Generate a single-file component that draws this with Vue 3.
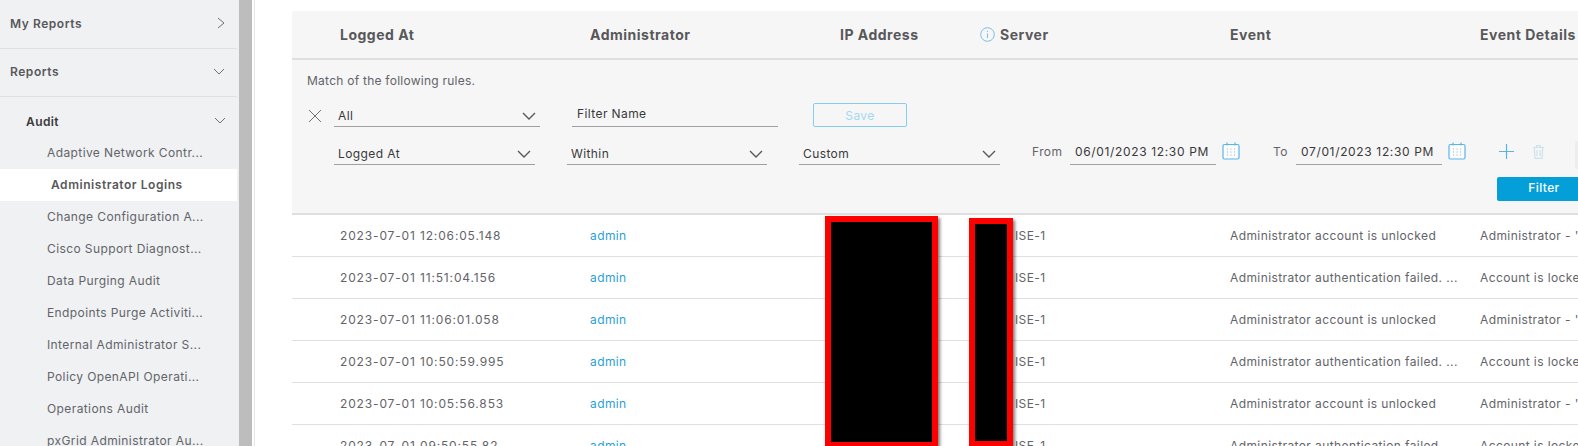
<script setup>
const items = [
  { label: 'Adaptive Network Contr...' },
  { label: 'Administrator Logins', active: true },
  { label: 'Change Configuration A...' },
  { label: 'Cisco Support Diagnost...' },
  { label: 'Data Purging Audit' },
  { label: 'Endpoints Purge Activiti...' },
  { label: 'Internal Administrator S...' },
  { label: 'Policy OpenAPI Operati...' },
  { label: 'Operations Audit' },
  { label: 'pxGrid Administrator Au...' },
]
const unlocked = { event: 'Administrator account is unlocked', details: "Administrator - 'admin' unlocked" }
const failed = { event: 'Administrator authentication failed. ...', details: 'Account is locked' }
const rows = [
  { time: '2023-07-01 12:06:05.148', ...unlocked },
  { time: '2023-07-01 11:51:04.156', ...failed },
  { time: '2023-07-01 11:06:01.058', ...unlocked },
  { time: '2023-07-01 10:50:59.995', ...failed },
  { time: '2023-07-01 10:05:56.853', ...unlocked },
  { time: '2023-07-01 09:50:55.82', ...failed },
]
</script>

<template>
  <div class="page">
    <aside class="sidebar">
      <div class="nav-head">
        <span>My Reports</span>
        <svg class="chev-r" width="8" height="12" viewBox="0 0 8 12"><path d="M1 1l6 5-6 5" /></svg>
      </div>
      <div class="nav-head">
        <span>Reports</span>
        <svg class="chev-d" width="12" height="8" viewBox="0 0 12 8"><path d="M1 1l5 5 5-5" /></svg>
      </div>
      <div class="nav-audit">
        <span>Audit</span>
        <svg class="chev-d" width="12" height="8" viewBox="0 0 12 8"><path d="M1 1l5 5 5-5" /></svg>
      </div>
      <div v-for="item in items" :key="item.label" class="nav-item" :class="{ active: item.active }">{{ item.label }}</div>
    </aside>
    <div class="scrollbar"></div>
    <main class="main">
      <div class="table">
        <div class="grid head">
          <div>Logged At</div>
          <div>Administrator</div>
          <div>IP Address</div>
          <div class="server-head">
            <svg width="15" height="15" viewBox="0 0 15 15" class="info">
              <circle cx="7.5" cy="7.5" r="6.8" />
              <path d="M7.5 6.5v4.5M7.5 3.8v1.2" />
            </svg>
            Server
          </div>
          <div>Event</div>
          <div>Event Details</div>
        </div>

        <section class="panel">
          <div class="match">Match of the following rules.</div>
          <div class="line line-top">
            <svg class="close" width="14" height="12" viewBox="0 0 14 12"><path d="M1 0l12 12M13 0L1 12" /></svg>
            <div class="select w206"><span>All</span><svg class="caret" width="14" height="8" viewBox="0 0 14 8"><path d="M1 1l6 6 6-6" /></svg></div>
            <div class="input-name">Filter Name</div>
            <button class="save">Save</button>
          </div>
          <div class="line line-second">
            <div class="select w201"><span>Logged At</span><svg class="caret" width="14" height="8" viewBox="0 0 14 8"><path d="M1 1l6 6 6-6" /></svg></div>
            <div class="select w200"><span>Within</span><svg class="caret" width="14" height="8" viewBox="0 0 14 8"><path d="M1 1l6 6 6-6" /></svg></div>
            <div class="select w201"><span>Custom</span><svg class="caret" width="14" height="8" viewBox="0 0 14 8"><path d="M1 1l6 6 6-6" /></svg></div>
            <div class="range">
              <span class="from">From</span>
              <div class="date">06/01/2023 12:30 PM</div>
              <svg class="cal" width="18" height="18" viewBox="0 0 18 18">
                <rect x="1" y="2.5" width="16" height="14.5" rx="1.5" />
                <path d="M5 0.5v3M13 0.5v3" />
                <path class="dots" d="M5 7h1M8.5 7h1M12 7h1M5 10h1M8.5 10h1M12 10h1M5 13h1M8.5 13h1M12 13h1" />
              </svg>
              <span class="to">To</span>
              <div class="date">07/01/2023 12:30 PM</div>
              <svg class="cal" width="18" height="18" viewBox="0 0 18 18">
                <rect x="1" y="2.5" width="16" height="14.5" rx="1.5" />
                <path d="M5 0.5v3M13 0.5v3" />
                <path class="dots" d="M5 7h1M8.5 7h1M12 7h1M5 10h1M8.5 10h1M12 10h1M5 13h1M8.5 13h1M12 13h1" />
              </svg>
              <svg class="plus" width="15" height="15" viewBox="0 0 15 15"><path d="M7.5 0v15M0 7.5h15" /></svg>
              <svg class="trash" width="11" height="14" viewBox="0 0 11 14">
                <path d="M0 2.5h11M3.5 2V0.7h4V2M1.3 3l0.7 10.3h7L9.7 3M4 5v6M7 5v6" />
              </svg>
              <div class="pale"></div>
            </div>
          </div>
          <div class="actions"><button class="filter">Filter</button></div>
        </section>

        <div class="body">
          <div v-for="row in rows" :key="row.time" class="grid row">
            <div class="time">{{ row.time }}</div>
            <div class="link">admin</div>
            <div></div>
            <div class="ise">ISE-1</div>
            <div>{{ row.event }}</div>
            <div class="details">{{ row.details }}</div>
          </div>
          <div class="redact redact-ip"></div>
          <div class="redact redact-server"></div>
        </div>
      </div>
    </main>
  </div>
</template>

<style>
html, body { overflow: hidden; background: #fff; }
</style>

<style scoped>
.page {
  display: flex;
  width: 1578px;
  height: 446px;
  overflow: hidden;
  font-family: Inter, "Liberation Sans", sans-serif;
  font-size: 12px;
  letter-spacing: 0.4px;
  color: #626469;
  background: #fff;
}
.sidebar {
  flex: none;
  width: 239px;
  height: 446px;
  overflow: hidden;
  background: #f0f1f3;
}
.nav-head {
  display: flex;
  align-items: center;
  justify-content: space-between;
  box-sizing: border-box;
  width: 237px;
  height: 48.5px;
  padding: 0 12px 1px 10px;
  border-bottom: 1px solid #dfe0e2;
  font-weight: 600;
  letter-spacing: 0.55px;
  color: #58585b;
}
.nav-audit {
  display: flex;
  align-items: center;
  justify-content: space-between;
  box-sizing: border-box;
  width: 237px;
  height: 40px;
  padding: 8px 11px 0 26px;
  font-weight: 600;
  color: #39393b;
}
.chev-r path, .chev-d path { fill: none; stroke: #6e7074; stroke-width: 1; }
.nav-item {
  box-sizing: border-box;
  width: 237px;
  height: 32px;
  padding-left: 47px;
  line-height: 32px;
  white-space: nowrap;
}
.nav-item.active {
  padding-left: 51px;
  background: #fff;
  font-weight: 600;
  letter-spacing: 0.55px;
  color: #58585b;
}
.scrollbar { flex: none; width: 13px; background: #bdbdbd; }
.main {
  flex: none;
  box-sizing: border-box;
  width: 1326px;
  margin-left: 2px;
  padding: 11px 0 0 37px;
  border-left: 1px solid #e6e6e6;
  overflow: hidden;
}
.table { width: 1340px; }
.grid {
  display: grid;
  grid-template-columns: 250px 250px 140px 250px 250px 152px;
  padding-left: 48px;
}
.head {
  height: 47px;
  align-items: center;
  background: #f6f6f6;
  border-bottom: 2px solid #dfdfdf;
  font-size: 14px;
  font-weight: 700;
  letter-spacing: 0.5px;
  color: #58585b;
  white-space: nowrap;
}
.server-head { display: flex; align-items: center; gap: 5px; }
.info circle, .info path { fill: none; stroke: #79bfe9; stroke-width: 1; }
.panel {
  box-sizing: border-box;
  height: 155px;
  padding: 13px 41px 12px 15px;
  background: #f6f6f6;
  border-bottom: 2px solid #dfdfdf;
}
.match { height: 16px; line-height: 16px; letter-spacing: 0.25px; }
.line { display: flex; }
.line-top { margin-top: 13px; height: 25px; align-items: flex-start; }
.close { flex: none; margin: 8px 12px 0 1px; }
.close path { fill: none; stroke: #6e7074; stroke-width: 1; }
.select {
  display: flex;
  flex: none;
  align-items: center;
  justify-content: space-between;
  box-sizing: border-box;
  height: 25px;
  padding: 3px 4px 0 4px;
  border-bottom: 1px solid #a0a0a0;
  color: #39393b;
}
.w206 { width: 206px; }
.w201 { width: 201px; }
.w200 { width: 200px; }
.caret path { fill: none; stroke: #58585b; stroke-width: 1.4; }
.input-name {
  flex: none;
  box-sizing: border-box;
  width: 206px;
  height: 25px;
  margin-left: 32px;
  padding-left: 5px;
  border-bottom: 1px solid #a0a0a0;
  line-height: 24px;
  color: #39393b;
}
.save {
  flex: none;
  box-sizing: border-box;
  width: 94px;
  height: 24px;
  margin: 1px 0 0 35px;
  padding: 0;
  background: transparent;
  border: 1px solid #85cdf0;
  border-radius: 2px;
  font: inherit;
  letter-spacing: inherit;
  color: #a3d8f2;
}
.line-second { margin: 13px 0 0 27px; height: 25px; gap: 32px; }
.range { display: flex; flex: none; align-items: center; height: 25px; }
.from { flex: none; width: 38px; padding-bottom: 2px; box-sizing: border-box; }
.to { flex: none; width: 23px; margin-left: 33px; padding-bottom: 2px; box-sizing: border-box; }
.date {
  flex: none;
  box-sizing: border-box;
  width: 146px;
  height: 25px;
  padding-left: 5px;
  border-bottom: 1px solid #a0a0a0;
  line-height: 24px;
  letter-spacing: 0.65px;
  color: #39393b;
  white-space: nowrap;
}
.cal { flex: none; margin: 0 0 3px 6px; }
.cal rect, .cal > path { fill: #fafcfe; stroke: #59b5ea; stroke-width: 1.2; }
.cal .dots { fill: none; stroke: #a8adc4; stroke-width: 1; }
.plus { flex: none; margin-left: 33px; margin-bottom: 2px; }
.plus path { fill: none; stroke: #5cb4e6; stroke-width: 1.2; }
.trash { flex: none; margin: 0 0 2px 19px; }
.trash path { fill: none; stroke: #cbe3ef; stroke-width: 1.2; }
.pale { flex: none; width: 10px; height: 28px; margin: 4px 0 0 31px; background: #eeeeee; }
.actions { display: flex; justify-content: flex-end; margin-top: 12px; }
.filter {
  box-sizing: border-box;
  width: 94px;
  height: 24px;
  padding: 0 0 3px;
  background: #049fd9;
  border: 0;
  border-radius: 2px;
  font: inherit;
  font-weight: 500;
  letter-spacing: inherit;
  color: #fff;
}
.body { position: relative; }
.row {
  height: 42px;
  box-sizing: border-box;
  align-items: center;
  border-bottom: 1px solid #e0e0e0;
  white-space: nowrap;
}
.time { letter-spacing: 0.85px; }
.link { color: #2a9fd8; }
.ise { padding-left: 35px; }
.details { overflow: hidden; }
.redact {
  position: absolute;
  box-sizing: border-box;
  border: 6px solid #f00;
  background: #000;
  box-shadow: 2px 2px 3px rgba(0, 0, 0, 0.5);
}
.redact-ip { left: 533px; top: 1px; width: 113px; height: 232px; }
.redact-server { left: 677px; top: 3px; width: 44px; height: 229px; }
</style>
